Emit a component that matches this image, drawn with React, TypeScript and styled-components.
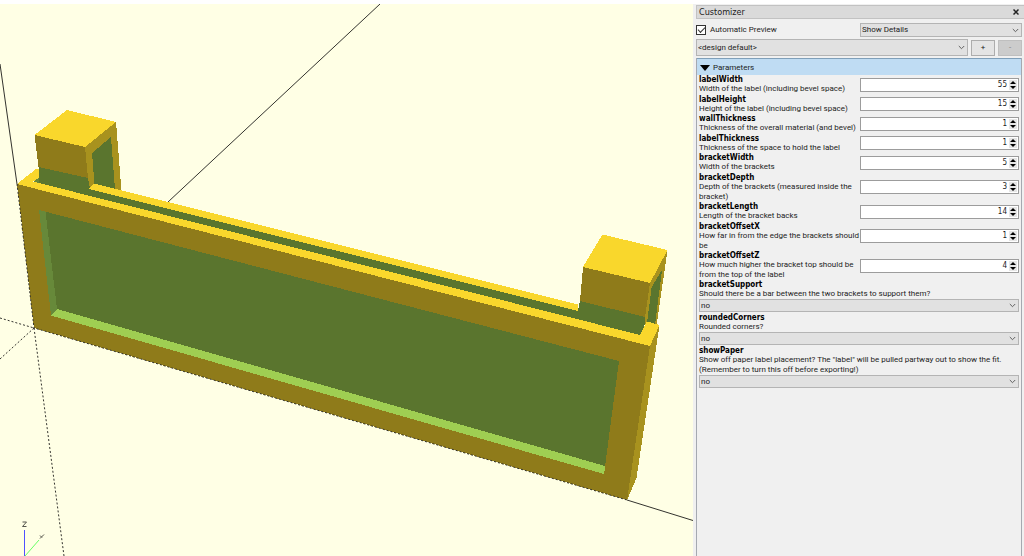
import React, { useState } from "react";
import styled, { createGlobalStyle } from "styled-components";

const Global = createGlobalStyle`
  * { box-sizing: border-box; }
  body {
    margin: 0;
    background: #ffffff;
    color: #1c1c1c;
    font: 8px/10px Roboto, "Liberation Sans", sans-serif;
  }
  button, input, select { font: inherit; color: inherit; margin: 0; }
`;

const Window = styled.div`
  display: flex;
  min-height: 100vh;
  padding-top: 4px;
`;

const Viewport = styled.main`
  flex: 1;
  min-width: 0;
  display: flex;
  background: #ffffe5;
`;

const Scene = styled.svg`
  flex: 1;
  min-width: 0;
  height: calc(100vh - 4px);
`;

const Dock = styled.aside`
  flex: 0 0 331px;
  display: flex;
  flex-direction: column;
  padding: 1px 0 0 3px;
  background: #f0f0f0;
`;

const TitleBar = styled.header`
  display: flex;
  align-items: center;
  justify-content: space-between;
  height: 14px;
  padding: 0 5px 0 2px;
  background: #dadada;
  border: 1px solid #c2c2c2;
  border-right: 0;
`;

const Title = styled.h1`
  margin: 0;
  font-family: "DejaVu Sans Condensed", "DejaVu Sans", sans-serif;
  font-size: 9px;
  font-weight: normal;
`;

const CloseButton = styled.button`
  display: flex;
  padding: 0;
  border: 0;
  background: none;
`;

const Toolbar = styled.div`
  display: flex;
  align-items: center;
  justify-content: space-between;
  gap: 3px;
  padding: 4px 2px 0 0;
`;

const PresetBar = styled(Toolbar)`
  padding-top: 2px;
`;

const CheckLabel = styled.label`
  display: flex;
  align-items: center;
  gap: 4px;
`;

const Checkbox = styled.input`
  appearance: none;
  width: 10px;
  height: 10px;
  border: 1px solid #333333;
  background: #ffffff;
  display: grid;
  place-items: center;
  &:checked::after {
    content: "";
    width: 6px;
    height: 3px;
    border: solid #333333;
    border-width: 0 0 1px 1px;
    transform: translateY(-1px) rotate(-45deg);
  }
`;

const SelectBox = styled.span<{ $width?: string }>`
  display: grid;
  align-items: center;
  width: ${(p) => p.$width ?? "100%"};
  > * { grid-area: 1 / 1; }
  > svg { justify-self: end; margin-right: 3px; pointer-events: none; }
`;

const Select = styled.select<{ $height: number }>`
  appearance: none;
  width: 100%;
  height: ${(p) => p.$height}px;
  padding: 0 12px 0 1px;
  border: 1px solid #b4b4b4;
  border-radius: 0;
  background: #e1e1e1;
`;

const PresetButton = styled.button`
  flex: 0 0 24px;
  height: 16px;
  padding: 0;
  border: 1px solid #adadad;
  background: #e4e4e4;
  &:disabled { background: #cccccc; border-color: #bfbfbf; color: #838383; }
`;

const Group = styled.section`
  flex: 1;
  margin: 2px 2px 0 0;
  border: 1px solid #a5a9b0;
  border-width: 0 1px 0 1px;
`;

const GroupHeader = styled.button`
  display: flex;
  align-items: center;
  gap: 3px;
  width: 100%;
  height: 17px;
  padding: 1px 0 0 3px;
  border: 0;
  border-top: 1px solid #7f9fb9;
  background: #bfdcf3;
`;

const NumberList = styled.div`
  display: flex;
  flex-direction: column;
  justify-content: space-between;
  min-height: 205px;
  padding: 0 2px;
`;

const NumberRow = styled.div`
  display: grid;
  grid-template-columns: minmax(0, 1fr) 159px;
  align-items: center;
`;

const ChoiceRow = styled.div`
  padding: 0 2px 1px;
`;

const Caption = styled.label`
  display: block;
`;

const Name = styled.strong`
  display: block;
  font-family: "DejaVu Sans Condensed", "DejaVu Sans", sans-serif;
  line-height: 9px;
  color: #000000;
`;

const Spin = styled.div`
  display: flex;
  height: 14px;
  padding: 1px;
  border: 1px solid #9c9c9c;
  background: #ffffff;
`;

const SpinInput = styled.input`
  flex: 1;
  min-width: 0;
  padding: 0 2px 0 0;
  border: 0;
  background: none;
  text-align: right;
  font-family: "DejaVu Sans Condensed", "DejaVu Sans", sans-serif;
  appearance: textfield;
  &::-webkit-inner-spin-button { display: none; }
`;

const SpinButtons = styled.div`
  display: flex;
  flex-direction: column;
  width: 8px;
`;

const SpinButton = styled.button`
  flex: 1;
  min-height: 0;
  display: grid;
  place-items: center;
  padding: 0;
  border: 0;
  background: #e6e6e6;
`;

type NumberParam = { name: string; text: string; value: number };

const numbers: NumberParam[] = [
  { name: "labelWidth", text: "Width of the label (including bevel space)", value: 55 },
  { name: "labelHeight", text: "Height of the label (including bevel space)", value: 15 },
  { name: "wallThickness", text: "Thickness of the overall material (and bevel)", value: 1 },
  { name: "labelThickness", text: "Thickness of the space to hold the label", value: 1 },
  { name: "bracketWidth", text: "Width of the brackets", value: 5 },
  { name: "bracketDepth", text: "Depth of the brackets (measured inside the bracket)", value: 3 },
  { name: "bracketLength", text: "Length of the bracket backs", value: 14 },
  { name: "bracketOffsetX", text: "How far in from the edge the brackets should be", value: 1 },
  { name: "bracketOffsetZ", text: "How much higher the bracket top should be from the top of the label", value: 4 },
];

const choices = [
  { name: "bracketSupport", text: "Should there be a bar between the two brackets to support them?" },
  { name: "roundedCorners", text: "Rounded corners?" },
  {
    name: "showPaper",
    text: 'Show off paper label placement? The "label" will be pulled partway out to show the fit. (Remember to turn this off before exporting!)',
  },
];

function Dropdown(props: { id?: string; label?: string; options: string[]; height: number; width?: string }) {
  return (
    <SelectBox $width={props.width}>
      <Select id={props.id} aria-label={props.label} $height={props.height}>
        {props.options.map((o) => (
          <option key={o}>{o}</option>
        ))}
      </Select>
      <svg width="7" height="5" viewBox="0 0 7 5" aria-hidden="true">
        <path d="M.8 1 3.5 3.7 6.2 1" fill="none" stroke="#606060" />
      </svg>
    </SelectBox>
  );
}

function NumberField({ param }: { param: NumberParam }) {
  const [value, setValue] = useState(param.value);
  return (
    <NumberRow>
      <Caption htmlFor={param.name}>
        <Name>{param.name}</Name>
        {param.text}
      </Caption>
      <Spin>
        <SpinInput
          id={param.name}
          type="number"
          value={value}
          onChange={(e) => setValue(Number(e.target.value))}
        />
        <SpinButtons>
          <SpinButton aria-label={`Increase ${param.name}`} onClick={() => setValue(value + 1)}>
            <svg width="6" height="3" viewBox="0 0 6 3"><path d="M0 3 3 0 6 3Z" /></svg>
          </SpinButton>
          <SpinButton aria-label={`Decrease ${param.name}`} onClick={() => setValue(value - 1)}>
            <svg width="6" height="3" viewBox="0 0 6 3"><path d="M0 0 3 3 6 0Z" /></svg>
          </SpinButton>
        </SpinButtons>
      </Spin>
    </NumberRow>
  );
}

const yellow = "#f9d72c";
const front = "#8f7b1a";
const side = "#a8921e";
const green = "#5a752e";
const facet = "#67893a";

function Model() {
  return (
    <Scene viewBox="0 4 693 552" preserveAspectRatio="xMinYMin slice" role="img" aria-label="Label holder model">
      <g stroke="#33332e" strokeWidth="1" fill="none">
        <path d="M0 64 17 184M380 4 168 202M627 500 693 520.5" />
        <path d="M34 328 0 359M0 318 34 328M34 328 64 556" strokeDasharray="2 2" />
      </g>
      <g shapeRendering="crispEdges">
        {/* left bracket */}
        <path fill={side} d="M85 147 116 122 121.5 191 93 184 89 189Z" />
        <path fill={green} d="M92 153 111 137 115 189 94.5 184Z" />
        <path fill={yellow} d="M67 110 116 122 85 147 34.5 135Z" />
        <path fill={front} d="M34.5 135 85 147 88 178 38.5 167Z" />
        {/* right bracket */}
        <path fill={side} d="M650 283 667.5 250 656.5 326 644 324Z" />
        <path fill={green} d="M651.7 287 662 270 655 325 647 323Z" />
        <path fill={yellow} d="M602.5 234.5 667.5 250 650 283 583 267Z" />
        <path fill={front} d="M583 267 650 283 645 317 580 301Z" />
        {/* slot, back rim and front rim */}
        <path fill={green} d="M38.5 167 88 178 90 188 578 310 580 301 645 317 645 324 640 336 33 182 39 178Z" />
        <path fill={facet} d="M33 182 39 177.5 39.5 183Z" />
        <path fill={yellow} d="M94 183.5 578.5 304.5 578 311 89 189Z" />
        <path fill={yellow} d="M17 184 36 169 38.5 169.5 39 178 33 181.5 640 335 647 321.5 659.5 325 650 346Z" />
        {/* frame */}
        <path fill={front} d="M17 184 650 346 627 500 34 328Z" />
        <path fill={side} d="M650 346 659.5 325 636.5 478 627 500Z" />
        <path fill={green} d="M39 210 619 361 604 474 51 315.5Z" />
        <path fill={facet} d="M39 210 45.5 211.7 57 309 51 315.5Z" />
        <path fill="#9fce52" d="M57 309 605.2 466 604 474 51 315.5Z" />
      </g>
      <path d="M17 184 34 328 627 500" fill="none" stroke="#33332e" strokeDasharray="2 2" />
      <path d="M24.5 530V556" stroke="#5050ff" />
      <path d="M25 556 39 540" stroke="#66ff66" />
      <path d="M22.5 522H26.5L22.5 526.5H26.5M40 535.5 42 537.5M44 534.5 40 538.5" fill="none" stroke="#55554c" />
    </Scene>
  );
}

export default function App() {
  return (
    <Window>
      <Global />
      <Viewport>
        <Model />
      </Viewport>
      <Dock>
        <TitleBar>
          <Title>Customizer</Title>
          <CloseButton aria-label="Close">
            <svg width="6" height="6" viewBox="0 0 6 6">
              <path d="M.5 .5 5.5 5.5M5.5 .5 .5 5.5" stroke="#222" strokeWidth="1.5" />
            </svg>
          </CloseButton>
        </TitleBar>
        <Toolbar>
          <CheckLabel>
            <Checkbox type="checkbox" defaultChecked />
            Automatic Preview
          </CheckLabel>
          <Dropdown label="Detail level" options={["Show Details"]} height={14} width="162px" />
        </Toolbar>
        <PresetBar>
          <Dropdown label="Preset" options={["<design default>"]} height={17} />
          <PresetButton aria-label="Add preset">+</PresetButton>
          <PresetButton aria-label="Remove preset" disabled>-</PresetButton>
        </PresetBar>
        <Group>
          <GroupHeader>
            <svg width="10" height="6" viewBox="0 0 10 6" aria-hidden="true"><path d="M0 0H10L5 6Z" /></svg>
            Parameters
          </GroupHeader>
          <NumberList>
            {numbers.map((p) => (
              <NumberField key={p.name} param={p} />
            ))}
          </NumberList>
          {choices.map((c) => (
            <ChoiceRow key={c.name}>
              <Caption htmlFor={c.name}>
                <Name>{c.name}</Name>
                {c.text}
              </Caption>
              <Dropdown id={c.name} options={["no", "yes"]} height={13} />
            </ChoiceRow>
          ))}
        </Group>
      </Dock>
    </Window>
  );
}
